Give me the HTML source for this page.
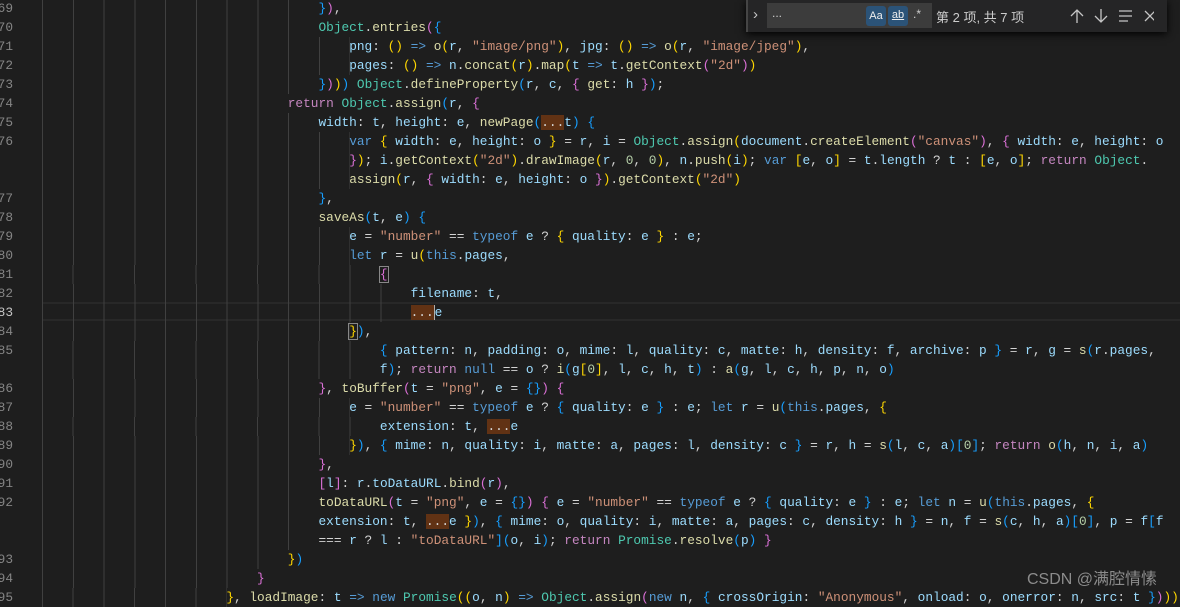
<!DOCTYPE html>
<html><head><meta charset="utf-8"><style>
body{margin:0;width:1180px;height:598px;overflow:hidden;background:#1e1e1e;position:relative;font-family:"Liberation Mono",monospace;}
.r{position:absolute;left:42px;height:19px;line-height:19px;font-size:12.8px;white-space:pre;color:#d4d4d4;}
.g{position:absolute;left:42px;height:19px;background:repeating-linear-gradient(to right,#404040 0 1px,transparent 1px 30.75px);}
.n{position:absolute;left:-23px;width:36px;text-align:right;height:19px;line-height:19px;font-size:12.8px;color:#858585;font-family:"Liberation Mono",monospace;}
.k{color:#c586c0}.b{color:#569cd6}.c{color:#4ec9b0}.p{color:#9cdcfe}.f{color:#dcdcaa}.s{color:#ce9178}.y{color:#ffd700}.m{color:#da70d6}.l{color:#179fff}.d{color:#b5cea8}
.h{background:#613214}
</style></head><body>
<div style="position:absolute;left:42px;top:302px;width:1138px;height:15px;border-top:2px solid #282828;border-bottom:2px solid #282828"></div>

<div class="g" style="top:-1.5px;width:276.75px"></div>
<div class="g" style="top:17.5px;width:276.75px"></div>
<div class="g" style="top:36.5px;width:307.5px"></div>
<div class="g" style="top:55.5px;width:307.5px"></div>
<div class="g" style="top:74.5px;width:276.75px"></div>
<div class="g" style="top:93.5px;width:246px"></div>
<div class="g" style="top:112.5px;width:276.75px"></div>
<div class="g" style="top:131.5px;width:307.5px"></div>
<div class="g" style="top:150.5px;width:307.5px"></div>
<div class="g" style="top:169.5px;width:307.5px"></div>
<div class="g" style="top:188.5px;width:276.75px"></div>
<div class="g" style="top:207.5px;width:276.75px"></div>
<div class="g" style="top:226.5px;width:307.5px"></div>
<div class="g" style="top:245.5px;width:307.5px"></div>
<div class="g" style="top:264.5px;width:338.25px"></div>
<div class="g" style="top:283.5px;width:369px"></div>
<div class="g" style="top:302.5px;width:369px"></div>
<div class="g" style="top:321.5px;width:307.5px"></div>
<div class="g" style="top:340.5px;width:338.25px"></div>
<div class="g" style="top:359.5px;width:338.25px"></div>
<div class="g" style="top:378.5px;width:276.75px"></div>
<div class="g" style="top:397.5px;width:307.5px"></div>
<div class="g" style="top:416.5px;width:338.25px"></div>
<div class="g" style="top:435.5px;width:307.5px"></div>
<div class="g" style="top:454.5px;width:276.75px"></div>
<div class="g" style="top:473.5px;width:276.75px"></div>
<div class="g" style="top:492.5px;width:276.75px"></div>
<div class="g" style="top:511.5px;width:276.75px"></div>
<div class="g" style="top:530.5px;width:276.75px"></div>
<div class="g" style="top:549.5px;width:246px"></div>
<div class="g" style="top:568.5px;width:215.25px"></div>
<div class="g" style="top:587.5px;width:184.5px"></div>

<div class="n" style="top:-1.5px">69</div>
<div class="n" style="top:17.5px">70</div>
<div class="n" style="top:36.5px">71</div>
<div class="n" style="top:55.5px">72</div>
<div class="n" style="top:74.5px">73</div>
<div class="n" style="top:93.5px">74</div>
<div class="n" style="top:112.5px">75</div>
<div class="n" style="top:131.5px">76</div>
<div class="n" style="top:188.5px">77</div>
<div class="n" style="top:207.5px">78</div>
<div class="n" style="top:226.5px">79</div>
<div class="n" style="top:245.5px">80</div>
<div class="n" style="top:264.5px">81</div>
<div class="n" style="top:283.5px">82</div>
<div class="n" style="top:302.5px;color:#c6c6c6">83</div>
<div class="n" style="top:321.5px">84</div>
<div class="n" style="top:340.5px">85</div>
<div class="n" style="top:378.5px">86</div>
<div class="n" style="top:397.5px">87</div>
<div class="n" style="top:416.5px">88</div>
<div class="n" style="top:435.5px">89</div>
<div class="n" style="top:454.5px">90</div>
<div class="n" style="top:473.5px">91</div>
<div class="n" style="top:492.5px">92</div>
<div class="n" style="top:549.5px">93</div>
<div class="n" style="top:568.5px">94</div>
<div class="n" style="top:587.5px">95</div>

<div class="r" style="top:-1.5px">                                    <span class="l">}</span><span class="m">)</span>,</div>
<div class="r" style="top:17.5px">                                    <span class="c">Object</span>.<span class="f">entries</span><span class="m">(</span><span class="l">{</span></div>
<div class="r" style="top:36.5px">                                        <span class="p">png</span>: <span class="y">()</span> <span class="b">=&gt;</span> <span class="f">o</span><span class="y">(</span><span class="p">r</span>, <span class="s">"image/png"</span><span class="y">)</span>, <span class="p">jpg</span>: <span class="y">()</span> <span class="b">=&gt;</span> <span class="f">o</span><span class="y">(</span><span class="p">r</span>, <span class="s">"image/jpeg"</span><span class="y">)</span>,</div>
<div class="r" style="top:55.5px">                                        <span class="p">pages</span>: <span class="y">()</span> <span class="b">=&gt;</span> <span class="p">n</span>.<span class="f">concat</span><span class="y">(</span><span class="p">r</span><span class="y">)</span>.<span class="f">map</span><span class="y">(</span><span class="p">t</span> <span class="b">=&gt;</span> <span class="p">t</span>.<span class="f">getContext</span><span class="m">(</span><span class="s">"2d"</span><span class="m">)</span><span class="y">)</span></div>
<div class="r" style="top:74.5px">                                    <span class="l">}</span><span class="m">)</span><span class="y">)</span><span class="l">)</span> <span class="c">Object</span>.<span class="f">defineProperty</span><span class="l">(</span><span class="p">r</span>, <span class="p">c</span>, <span class="m">{</span> <span class="f">get</span>: <span class="p">h</span> <span class="m">}</span><span class="l">)</span>;</div>
<div class="r" style="top:93.5px">                                <span class="k">return</span> <span class="c">Object</span>.<span class="f">assign</span><span class="l">(</span><span class="p">r</span>, <span class="m">{</span></div>
<div class="r" style="top:112.5px">                                    <span class="p">width</span>: <span class="p">t</span>, <span class="p">height</span>: <span class="p">e</span>, <span class="f">newPage</span><span class="l">(</span><span class="h">...</span><span class="p">t</span><span class="l">)</span> <span class="l">{</span></div>
<div class="r" style="top:131.5px">                                        <span class="b">var</span> <span class="y">{</span> <span class="p">width</span>: <span class="p">e</span>, <span class="p">height</span>: <span class="p">o</span> <span class="y">}</span> = <span class="p">r</span>, <span class="p">i</span> = <span class="c">Object</span>.<span class="f">assign</span><span class="y">(</span><span class="p">document</span>.<span class="f">createElement</span><span class="m">(</span><span class="s">"canvas"</span><span class="m">)</span>, <span class="m">{</span> <span class="p">width</span>: <span class="p">e</span>, <span class="p">height</span>: <span class="p">o</span></div>
<div class="r" style="top:150.5px">                                        <span class="m">}</span><span class="y">)</span>; <span class="p">i</span>.<span class="f">getContext</span><span class="y">(</span><span class="s">"2d"</span><span class="y">)</span>.<span class="f">drawImage</span><span class="y">(</span><span class="p">r</span>, <span class="d">0</span>, <span class="d">0</span><span class="y">)</span>, <span class="p">n</span>.<span class="f">push</span><span class="y">(</span><span class="p">i</span><span class="y">)</span>; <span class="b">var</span> <span class="y">[</span><span class="p">e</span>, <span class="p">o</span><span class="y">]</span> = <span class="p">t</span>.<span class="p">length</span> ? <span class="p">t</span> : <span class="y">[</span><span class="p">e</span>, <span class="p">o</span><span class="y">]</span>; <span class="k">return</span> <span class="c">Object</span>.</div>
<div class="r" style="top:169.5px">                                        <span class="f">assign</span><span class="y">(</span><span class="p">r</span>, <span class="m">{</span> <span class="p">width</span>: <span class="p">e</span>, <span class="p">height</span>: <span class="p">o</span> <span class="m">}</span><span class="y">)</span>.<span class="f">getContext</span><span class="y">(</span><span class="s">"2d"</span><span class="y">)</span></div>
<div class="r" style="top:188.5px">                                    <span class="l">}</span>,</div>
<div class="r" style="top:207.5px">                                    <span class="f">saveAs</span><span class="l">(</span><span class="p">t</span>, <span class="p">e</span><span class="l">)</span> <span class="l">{</span></div>
<div class="r" style="top:226.5px">                                        <span class="p">e</span> = <span class="s">"number"</span> == <span class="b">typeof</span> <span class="p">e</span> ? <span class="y">{</span> <span class="p">quality</span>: <span class="p">e</span> <span class="y">}</span> : <span class="p">e</span>;</div>
<div class="r" style="top:245.5px">                                        <span class="b">let</span> <span class="p">r</span> = <span class="f">u</span><span class="y">(</span><span class="b">this</span>.<span class="p">pages</span>,</div>
<div class="r" style="top:264.5px">                                            <span class="m" style="outline:1px solid #888;color:#da70d6">{</span></div>
<div class="r" style="top:283.5px">                                                <span class="p">filename</span>: <span class="p">t</span>,</div>
<div class="r" style="top:302.5px">                                                <span class="h">...</span><span class="p" style="border-left:1px solid #aeafad">e</span></div>
<div class="r" style="top:321.5px">                                        <span class="y" style="outline:1px solid #888">}</span><span class="l">)</span>,</div>
<div class="r" style="top:340.5px">                                            <span class="l">{</span> <span class="p">pattern</span>: <span class="p">n</span>, <span class="p">padding</span>: <span class="p">o</span>, <span class="p">mime</span>: <span class="p">l</span>, <span class="p">quality</span>: <span class="p">c</span>, <span class="p">matte</span>: <span class="p">h</span>, <span class="p">density</span>: <span class="p">f</span>, <span class="p">archive</span>: <span class="p">p</span> <span class="l">}</span> = <span class="p">r</span>, <span class="p">g</span> = <span class="f">s</span><span class="l">(</span><span class="p">r</span>.<span class="p">pages</span>,</div>
<div class="r" style="top:359.5px">                                            <span class="p">f</span><span class="l">)</span>; <span class="k">return</span> <span class="b">null</span> == <span class="p">o</span> ? <span class="f">i</span><span class="l">(</span><span class="p">g</span><span class="y">[</span><span class="d">0</span><span class="y">]</span>, <span class="p">l</span>, <span class="p">c</span>, <span class="p">h</span>, <span class="p">t</span><span class="l">)</span> : <span class="f">a</span><span class="l">(</span><span class="p">g</span>, <span class="p">l</span>, <span class="p">c</span>, <span class="p">h</span>, <span class="p">p</span>, <span class="p">n</span>, <span class="p">o</span><span class="l">)</span></div>
<div class="r" style="top:378.5px">                                    <span class="m">}</span>, <span class="f">toBuffer</span><span class="m">(</span><span class="p">t</span> = <span class="s">"png"</span>, <span class="p">e</span> = <span class="l">{}</span><span class="m">)</span> <span class="m">{</span></div>
<div class="r" style="top:397.5px">                                        <span class="p">e</span> = <span class="s">"number"</span> == <span class="b">typeof</span> <span class="p">e</span> ? <span class="l">{</span> <span class="p">quality</span>: <span class="p">e</span> <span class="l">}</span> : <span class="p">e</span>; <span class="b">let</span> <span class="p">r</span> = <span class="f">u</span><span class="l">(</span><span class="b">this</span>.<span class="p">pages</span>, <span class="y">{</span></div>
<div class="r" style="top:416.5px">                                            <span class="p">extension</span>: <span class="p">t</span>, <span class="h">...</span><span class="p">e</span></div>
<div class="r" style="top:435.5px">                                        <span class="y">}</span><span class="l">)</span>, <span class="l">{</span> <span class="p">mime</span>: <span class="p">n</span>, <span class="p">quality</span>: <span class="p">i</span>, <span class="p">matte</span>: <span class="p">a</span>, <span class="p">pages</span>: <span class="p">l</span>, <span class="p">density</span>: <span class="p">c</span> <span class="l">}</span> = <span class="p">r</span>, <span class="p">h</span> = <span class="f">s</span><span class="l">(</span><span class="p">l</span>, <span class="p">c</span>, <span class="p">a</span><span class="l">)</span><span class="l">[</span><span class="d">0</span><span class="l">]</span>; <span class="k">return</span> <span class="f">o</span><span class="l">(</span><span class="p">h</span>, <span class="p">n</span>, <span class="p">i</span>, <span class="p">a</span><span class="l">)</span></div>
<div class="r" style="top:454.5px">                                    <span class="m">}</span>,</div>
<div class="r" style="top:473.5px">                                    <span class="m">[</span><span class="p">l</span><span class="m">]</span>: <span class="p">r</span>.<span class="p">toDataURL</span>.<span class="f">bind</span><span class="m">(</span><span class="p">r</span><span class="m">)</span>,</div>
<div class="r" style="top:492.5px">                                    <span class="f">toDataURL</span><span class="m">(</span><span class="p">t</span> = <span class="s">"png"</span>, <span class="p">e</span> = <span class="l">{}</span><span class="m">)</span> <span class="m">{</span> <span class="p">e</span> = <span class="s">"number"</span> == <span class="b">typeof</span> <span class="p">e</span> ? <span class="l">{</span> <span class="p">quality</span>: <span class="p">e</span> <span class="l">}</span> : <span class="p">e</span>; <span class="b">let</span> <span class="p">n</span> = <span class="f">u</span><span class="l">(</span><span class="b">this</span>.<span class="p">pages</span>, <span class="y">{</span></div>
<div class="r" style="top:511.5px">                                    <span class="p">extension</span>: <span class="p">t</span>, <span class="h">...</span><span class="p">e</span> <span class="y">}</span><span class="l">)</span>, <span class="l">{</span> <span class="p">mime</span>: <span class="p">o</span>, <span class="p">quality</span>: <span class="p">i</span>, <span class="p">matte</span>: <span class="p">a</span>, <span class="p">pages</span>: <span class="p">c</span>, <span class="p">density</span>: <span class="p">h</span> <span class="l">}</span> = <span class="p">n</span>, <span class="p">f</span> = <span class="f">s</span><span class="l">(</span><span class="p">c</span>, <span class="p">h</span>, <span class="p">a</span><span class="l">)[</span><span class="d">0</span><span class="l">]</span>, <span class="p">p</span> = <span class="p">f</span><span class="l">[</span><span class="p">f</span></div>
<div class="r" style="top:530.5px">                                    === <span class="p">r</span> ? <span class="p">l</span> : <span class="s">"toDataURL"</span><span class="l">]</span><span class="l">(</span><span class="p">o</span>, <span class="p">i</span><span class="l">)</span>; <span class="k">return</span> <span class="c">Promise</span>.<span class="f">resolve</span><span class="l">(</span><span class="p">p</span><span class="l">)</span> <span class="m">}</span></div>
<div class="r" style="top:549.5px">                                <span class="y">}</span><span class="l">)</span></div>
<div class="r" style="top:568.5px">                            <span class="m">}</span></div>
<div class="r" style="top:587.5px">                        <span class="y">}</span>, <span class="f">loadImage</span>: <span class="p">t</span> <span class="b">=&gt;</span> <span class="b">new</span> <span class="c">Promise</span><span class="y">((</span><span class="p">o</span>, <span class="p">n</span><span class="y">)</span> <span class="b">=&gt;</span> <span class="c">Object</span>.<span class="f">assign</span><span class="m">(</span><span class="b">new</span> <span class="p">n</span>, <span class="l">{</span> <span class="p">crossOrigin</span>: <span class="s">"Anonymous"</span>, <span class="p">onload</span>: <span class="p">o</span>, <span class="p">onerror</span>: <span class="p">n</span>, <span class="p">src</span>: <span class="p">t</span> <span class="l">}</span><span class="m">)</span><span class="y">))</span></div>

<div style="position:absolute;left:746px;top:0;width:419px;height:32px;background:#252526;box-shadow:0 2px 8px #000;border-left:2px solid #454545"></div>
<div style="position:absolute;left:753px;top:6px;color:#c5c5c5;font:15px 'Liberation Sans',sans-serif">&#8250;</div>
<div style="position:absolute;left:767px;top:3px;width:165px;height:25px;background:#3c3c3c"></div>
<div style="position:absolute;left:772px;top:6px;color:#ccc;font:12px 'Liberation Sans',sans-serif">...</div>
<div style="position:absolute;left:866px;top:6px;width:20px;height:20px;background:#2b5378;border-radius:3px;color:#eee;font:11px 'Liberation Sans',sans-serif;text-align:center;line-height:20px">Aa</div>
<div style="position:absolute;left:888px;top:6px;width:20px;height:20px;background:#2b5378;border-radius:3px;color:#eee;font:11px 'Liberation Sans',sans-serif;text-align:center;line-height:18px;text-decoration:underline">ab</div>
<div style="position:absolute;left:913px;top:7px;color:#ccc;font:12px 'Liberation Sans',sans-serif">.*</div>
<div style="position:absolute;left:936px;top:7px;color:#ccc;font:13px 'Liberation Sans','Noto Sans CJK SC',sans-serif">第 2 项, 共 7 项</div>
<svg style="position:absolute;left:1068px;top:8px" width="86" height="16" fill="none" stroke="#c5c5c5" stroke-width="1.3">
<path d="M9 2V15M3 8L9 2L15 8"/>
<path d="M33 1V14M27 8L33 14L39 8"/>
<path d="M51 3H64M51 8H64M51 13H60"/>
<path d="M77 3L87 13M87 3L77 13"/>
</svg>

<div style="position:absolute;left:1027px;top:565px;color:#8c8c8c;font:16px 'Liberation Sans','Noto Sans CJK SC',sans-serif;background:rgba(30,30,30,0.6)">CSDN @满腔情愫</div>
</body></html>
